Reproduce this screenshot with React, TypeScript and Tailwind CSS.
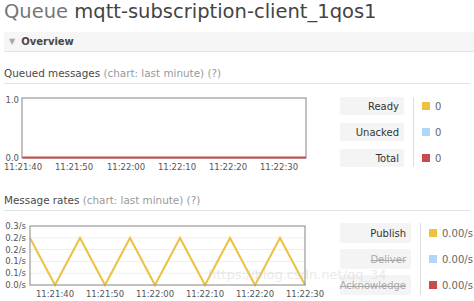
import React from 'react'

const font = { fontFamily: '"DejaVu Sans", Verdana, sans-serif' }

type Item = { label: string; color: string; value: string; off?: boolean }

function Legend({ items, boxW, rowH, gap }: { items: Item[]; boxW: string; rowH: string; gap: string }) {
  return (
    <div className="flex">
      <div className={`flex flex-col ${gap} pr-[9px]`}>
        {items.map((it) => (
          <div
            key={it.label}
            className={`${boxW} ${rowH} flex items-center justify-end rounded-[2px] bg-[#f4f4f4] pr-[5px] text-[10px] ${
              it.off ? 'text-[#aaa] line-through' : 'text-[#333]'
            }`}
          >
            {it.label}
          </div>
        ))}
      </div>
      <div className={`flex flex-col ${gap} border-l border-[#ddd] pl-[8px]`}>
        {items.map((it) => (
          <div key={it.label} className={`${rowH} flex items-center gap-[5px] text-[10px] text-[#666]`}>
            <span className="h-[8px] w-[8px]" style={{ background: it.color }} />
            <span>{it.value}</span>
          </div>
        ))}
      </div>
    </div>
  )
}

function QueuedChart() {
  const ticks = [
    ['11:21:40', 23],
    ['11:21:50', 74],
    ['11:22:00', 126],
    ['11:22:10', 177],
    ['11:22:20', 228],
    ['11:22:30', 279],
  ] as const
  // svg top at page y=90
  return (
    <svg width="330" height="82" className="block" style={font}>
      <rect x="22" y="6" width="284" height="60" fill="#fff" stroke="#999" strokeWidth="1.2" />
      <line x1="22.5" y1="65.5" x2="306" y2="65.5" stroke="#cb4b4b" strokeWidth="2" />
      <text x="19" y="11" textAnchor="end" fontSize="8.5" fill="#555">1.0</text>
      <text x="19" y="69" textAnchor="end" fontSize="8.5" fill="#555">0.0</text>
      {ticks.map(([t, x]) => (
        <text key={t} x={x} y="78" textAnchor="middle" fontSize="8.5" fill="#555">
          {t}
        </text>
      ))}
    </svg>
  )
}

function RatesChart() {
  // svg top at page y=216
  const top = 10
  const bottom = 69
  const rows = ['0.3/s', '0.2/s', '0.2/s', '0.1/s', '0.1/s', '0.0/s']
  const ticks = ['11:21:40', '11:21:50', '11:22:00', '11:22:10', '11:22:20', '11:22:30']
  const pts: string[] = []
  for (let i = 0; i <= 11; i++) {
    const x = 30 + i * 25
    pts.push(`${x},${i % 2 === 0 ? 22 : bottom}`)
  }
  return (
    <svg width="330" height="85" className="block" style={font}>
      <rect x="30" y={top} width="275" height={bottom - top} fill="#fff" />
      {rows.map((r, i) => {
        const y = top + (i * (bottom - top)) / 5
        return (
          <g key={i}>
            {i > 0 && i < 5 && <line x1="30" x2="305" y1={y} y2={y} stroke="#eee" strokeWidth="1" />}
            <text x="26" y={y + 3} textAnchor="end" fontSize="8.5" fill="#555">
              {r}
            </text>
          </g>
        )
      })}
      <polyline points={pts.join(' ')} fill="none" stroke="#edc240" strokeWidth="2" />
      <rect x="30" y={top} width="275" height={bottom - top} fill="none" stroke="#999" strokeWidth="1.2" />
      {ticks.map((t, i) => (
        <text key={t} x={55 + i * 50} y="81" textAnchor="middle" fontSize="8.5" fill="#555">
          {t}
        </text>
      ))}
    </svg>
  )
}

function SectionTitle({ name }: { name: string }) {
  return (
    <div className="mx-[4px] border-b border-[#e2e2e2] pb-[3px] text-[10.4px] leading-[13px] text-[#484848]">
      {name} <span className="text-[#999]">(chart: last minute) (?)</span>
    </div>
  )
}

export default function App() {
  return (
    <div className="relative h-[301px] w-[474px] overflow-hidden bg-white" style={font}>
      <h1 className="pl-[4px] pt-[1px] text-[19.5px] leading-[22px] text-[#444]">
        <span className="text-[#777]">Queue</span> mqtt-subscription-client_1qos1
      </h1>

      <div className="ml-[4px] mt-[9px] flex h-[20px] items-center gap-[6px] border-b border-[#e4e4e4] bg-[#f6f6f6] pl-[5px] text-[10px] font-bold text-[#484848]">
        <span className="text-[8px] text-[#aaa]">▼</span>
        Overview
      </div>

      <div className="mt-[15px]">
        <SectionTitle name="Queued messages" />
      </div>
      <div className="mt-[8px] flex">
        <QueuedChart />
        <div className="ml-[10px] mt-[5px]">
          <Legend
            boxW="w-[64px]"
            rowH="h-[18px]"
            gap="gap-[8px]"
            items={[
              { label: 'Ready', color: '#edc240', value: '0' },
              { label: 'Unacked', color: '#afd8f8', value: '0' },
              { label: 'Total', color: '#cb4b4b', value: '0' },
            ]}
          />
        </div>
      </div>

      <div className="mt-[20px]">
        <SectionTitle name="Message rates" />
      </div>
      <div className="mt-[5px] flex">
        <RatesChart />
        <div className="ml-[10px] mt-[7px]">
          <Legend
            boxW="w-[71px]"
            rowH="h-[20px]"
            gap="gap-[6px]"
            items={[
              { label: 'Publish', color: '#edc240', value: '0.00/s' },
              { label: 'Deliver', color: '#afd8f8', value: '0.00/s', off: true },
              { label: 'Acknowledge', color: '#cb4b4b', value: '0.00/s', off: true },
            ]}
          />
        </div>
      </div>

      <div className="pointer-events-none absolute left-[208px] top-[268px] text-[13px] leading-[14px] text-[#ccc] opacity-40">
        https://blog.csdn.net/qq_34
      </div>
    </div>
  )
}
